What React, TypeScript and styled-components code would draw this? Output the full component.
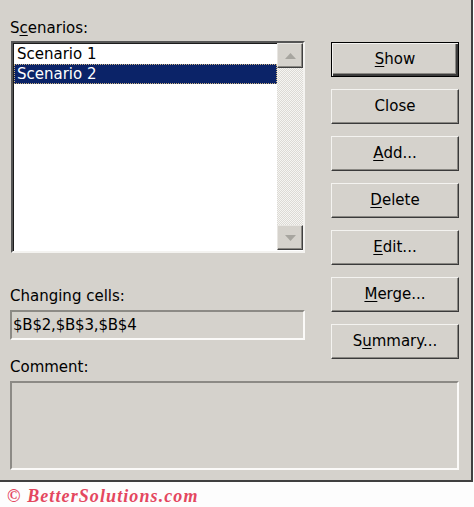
import React from 'react'
import styled, { createGlobalStyle } from 'styled-components'

const GlobalStyle = createGlobalStyle`
  html, body {
    margin: 0;
    padding: 0;
    background: #fdfdfd;
  }
  body {
    font-family: "DejaVu Sans", "Liberation Sans", sans-serif;
  }
`

const scenarios = ['Scenario 1', 'Scenario 2']

const buttons: { label: React.ReactNode; isDefault?: boolean }[] = [
  { label: (<><u>S</u>how</>), isDefault: true },
  { label: 'Close' },
  { label: (<><u>A</u>dd...</>) },
  { label: (<><u>D</u>elete</>) },
  { label: (<><u>E</u>dit...</>) },
  { label: (<><u>M</u>erge...</>) },
  { label: (<>S<u>u</u>mmary...</>) }
]

const Arrow: React.FC<{ down?: boolean }> = ({ down }) => (
  <svg width="11" height="6" viewBox="0 0 11 6">
    <path d={down ? 'M0 0 H11 L5.5 6 Z' : 'M0 6 H11 L5.5 0 Z'} fill="#a7a59f" />
  </svg>
)

const App: React.FC = () => {
  return (
    <Page>
      <GlobalStyle />
      <Dialog>
        <TopSection>
          <LeftColumn>
            <Label $bottom={2}>
              S<u>c</u>enarios:
            </Label>
            <ListBox>
              <ListItems>
                {scenarios.map((name, i) => (
                  <ListItem key={name} $selected={i === 1}>
                    {name}
                  </ListItem>
                ))}
              </ListItems>
              <ScrollBar>
                <ScrollButton>
                  <Arrow />
                </ScrollButton>
                <ScrollTrack />
                <ScrollButton>
                  <Arrow down />
                </ScrollButton>
              </ScrollBar>
            </ListBox>
            <Label $top={33}>Changing cells:</Label>
            <ReadOnlyField>$B$2,$B$3,$B$4</ReadOnlyField>
          </LeftColumn>
          <ButtonColumn>
            {buttons.map((b, i) => (
              <DialogButton key={i} $isDefault={b.isDefault}>
                {b.label}
              </DialogButton>
            ))}
          </ButtonColumn>
        </TopSection>
        <Label $top={-2}>Comment:</Label>
        <CommentBox />
      </Dialog>
      <Watermark>© BetterSolutions.com</Watermark>
    </Page>
  )
}

const Page = styled.div`
  width: 474px;
  height: 507px;
  display: flex;
  flex-direction: column;
  overflow: hidden;
`

const Dialog = styled.div`
  box-sizing: border-box;
  width: 473px;
  height: 482px;
  background: #d5d2cc;
  border-right: 2px solid #404040;
  border-bottom: 2px solid #404040;
  padding: 18px 12px 0 10px;
  display: flex;
  flex-direction: column;
  color: #000;
`

const TopSection = styled.div`
  display: flex;
  flex-direction: row;
  gap: 26px;
`

const LeftColumn = styled.div`
  display: flex;
  flex-direction: column;
  width: 295px;
`

const Label = styled.div<{ $top?: number; $bottom?: number }>`
  font-size: 15px;
  line-height: 20px;
  height: 20px;
  margin-top: ${(p) => p.$top ?? 0}px;
  margin-bottom: ${(p) => p.$bottom ?? 4}px;
  u {
    text-decoration-thickness: 1px;
    text-underline-offset: 2px;
  }
`

const ListBox = styled.div`
  box-sizing: border-box;
  margin-left: 1px;
  width: 294px;
  height: 212px;
  margin-top: 1px;
  background: #fff;
  border: 2px solid;
  border-color: #555 #f4f3f0 #f4f3f0 #555;
  box-shadow: inset 1px 1px 0 #1c1c1c;
  display: flex;
  flex-direction: row;
`

const ListItems = styled.div`
  flex: 1;
  display: flex;
  flex-direction: column;
  padding: 1px 0 0 1px;
`

const ListItem = styled.div<{ $selected?: boolean }>`
  font-size: 15px;
  line-height: 20px;
  height: 20px;
  padding-left: 3px;
  background: ${(p) => (p.$selected ? '#0b2368' : 'transparent')};
  color: ${(p) => (p.$selected ? '#fff' : '#000')};
  outline: ${(p) => (p.$selected ? '1px dotted #c8b080' : 'none')};
  outline-offset: -1px;
`

const ScrollBar = styled.div`
  width: 26px;
  display: flex;
  flex-direction: column;
  padding: 0 0 1px 0;
`

const ScrollButton = styled.div`
  box-sizing: border-box;
  height: 25px;
  background: #d5d2cc;
  border: 1px solid;
  border-color: #e8e6e2 #404040 #404040 #e8e6e2;
  box-shadow: inset -1px -1px 0 #8a8883;
  display: flex;
  align-items: center;
  justify-content: center;
`

const ScrollTrack = styled.div`
  flex: 1;
  background-color: #ebe9e5;
  background-image: repeating-conic-gradient(#f6f5f2 0 25%, #dcdad5 0 50%);
  background-size: 2px 2px;
`

const ReadOnlyField = styled.div`
  box-sizing: border-box;
  width: 295px;
  height: 30px;
  border: 2px solid;
  border-color: #8c8a85 #fbfaf8 #fbfaf8 #8c8a85;
  font-size: 15px;
  line-height: 26px;
  padding-left: 1px;
  letter-spacing: -0.2px;
`

const ButtonColumn = styled.div`
  display: flex;
  flex-direction: column;
  gap: 12px;
  padding-top: 24px;
`

const DialogButton = styled.div<{ $isDefault?: boolean }>`
  box-sizing: border-box;
  width: 128px;
  height: 35px;
  background: #d5d2cc;
  border: 1px solid;
  border-color: ${(p) => (p.$isDefault ? '#000' : '#f4f3f0 #3a3a3a #3a3a3a #f4f3f0')};
  box-shadow: ${(p) =>
    p.$isDefault
      ? 'inset 1px 1px 0 #f4f3f0, inset -2px -2px 0 #3a3a3a, inset -3px -3px 0 #8a8883'
      : 'inset -1px -1px 0 #8a8883'};
  font-size: 15px;
  display: flex;
  align-items: center;
  justify-content: center;
  padding-bottom: 2px;
  u {
    text-decoration-thickness: 1px;
    text-underline-offset: 2px;
  }
`

const CommentBox = styled.div`
  box-sizing: border-box;
  width: 449px;
  height: 89px;
  border: 2px solid;
  border-color: #8c8a85 #fbfaf8 #fbfaf8 #8c8a85;
`

const Watermark = styled.div`
  font-family: "Liberation Serif", serif;
  font-style: italic;
  font-weight: bold;
  font-size: 18px;
  letter-spacing: 1.1px;
  color: #e4475f;
  padding: 3px 0 0 7px;
  line-height: 22px;
`

export default App
